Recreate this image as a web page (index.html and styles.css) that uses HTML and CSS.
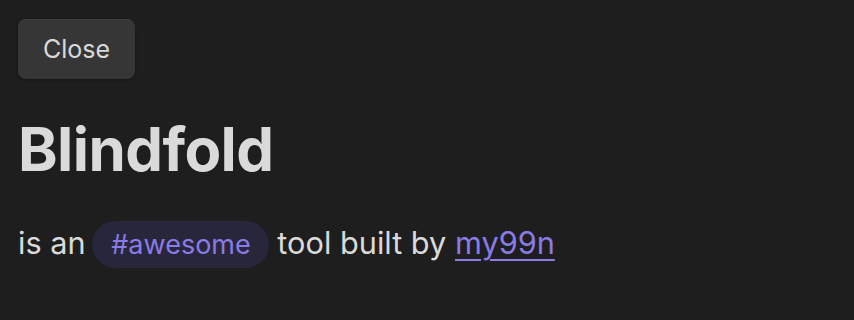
FILE: index.html
```html
<!DOCTYPE html>
<html>
<head>
<meta charset="utf-8">
<link rel="stylesheet" href="styles.css">
</head>
<body>
<div class="page">
  <button class="close-btn">Close</button>
  <h1 class="title">Blindfold</h1>
  <p class="desc">is an <span class="tag">#awesome</span> tool built by <a class="link" href="#">my99n</a></p>
</div>
</body>
</html>
```
FILE: styles.css
```css
html, body {
  margin: 0;
  padding: 0;
  background: #1e1e1e;
}
body {
  font-family: Inter, "Noto Sans", sans-serif;
  color: #dadada;
  width: 854px;
  height: 320px;
  overflow: hidden;
}
.page {
  padding: 19px 18px;
  display: flex;
  flex-direction: column;
  align-items: flex-start;
}
.close-btn {
  font-family: Inter, "Noto Sans", sans-serif;
  font-size: 25px;
  color: #dadada;
  background: #363636;
  border: none;
  border-radius: 8px;
  height: 60px;
  padding: 0 25px;
  box-shadow: 0 1px 3px rgba(0,0,0,0.35), inset 0 1px 0 rgba(255,255,255,0.04);
  cursor: pointer;
}
.title {
  font-size: 60px;
  font-weight: 700;
  margin: 34px 0 0 0;
  line-height: 72px;
  letter-spacing: -0.6px;
  color: #dadada;
}
.desc {
  font-size: 30.7px;
  margin: 34px 0 0 0;
  line-height: 47px;
}
.tag {
  display: inline-block;
  background: #28263a;
  color: #8a7be6;
  border-radius: 24px;
  font-size: 27px;
  height: 47px;
  line-height: 47px;
  padding: 0 18px 0 19px;
  margin-left: -2px;
  vertical-align: baseline;
}
.link {
  color: #8a7be6;
  text-decoration: underline;
  text-decoration-thickness: 2px;
  text-underline-offset: 5px;
}
```
